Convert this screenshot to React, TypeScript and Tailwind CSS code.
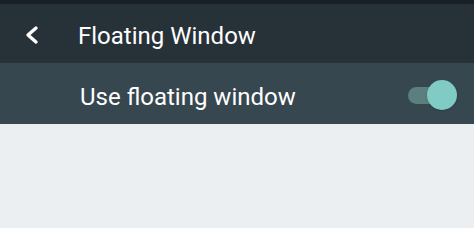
import React, { useState } from 'react';

const App = () => {
  const [on, setOn] = useState(true);

  return (
    <div className="w-[474px] h-[228px] bg-[#eceff1] font-['Roboto',sans-serif] overflow-hidden">
      <div className="h-[4px] bg-[#1a2126]" />
      <div className="h-[59px] bg-[#263238] flex items-center">
        <button className="w-[78px] h-full flex items-center pl-[24px] pt-[3px] text-white">
          <svg width="16" height="20" viewBox="0 0 16 20" fill="none">
            <path d="M12 3 L4 10 L12 17" stroke="white" strokeWidth="3.4" strokeLinecap="round" strokeLinejoin="round" />
          </svg>
        </button>
        <span className="pt-[5px] text-white text-[24px] leading-none">Floating Window</span>
      </div>
      <div className="h-[61px] bg-[#37474f] flex items-center pl-[80px] pr-[17px]">
        <span className="flex-1 pt-[6px] text-white text-[24px] leading-none">Use floating window</span>
        <button onClick={() => setOn(!on)} className="relative mt-[3px] w-[52px] h-[30px] flex items-center">
          <span className="ml-[3px] w-[42px] h-[17px] rounded-full bg-[#5b7f7c]" />
          <span className={`absolute top-0 w-[30px] h-[30px] rounded-full bg-[#80cbc4] shadow ${on ? 'left-[22px]' : 'left-0'}`} />
        </button>
      </div>
    </div>
  );
};

export default App;
